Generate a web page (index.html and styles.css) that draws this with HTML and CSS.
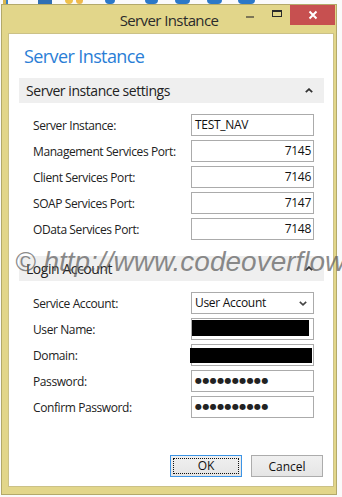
FILE: index.html
```html
<!DOCTYPE html>
<html>
<head>
<meta charset="utf-8">
<link rel="stylesheet" href="styles.css">
</head>
<body>
<div class="desktop">
  <div class="strip">
    <span class="bit b1"></span><span class="bit b2"></span><span class="bit b3"></span><span class="bit b4"></span><span class="bit b5"></span><span class="bit b6"></span><span class="bit b7"></span><span class="bit b8"></span><span class="bit b9"></span><span class="bit b10"></span>
  </div>
  <div class="window">
    <div class="titlebar">
      <div></div>
      <div class="title">Server Instance</div>
      <div class="controls">
        <span class="ctl"><span class="dash"></span></span>
        <span class="ctl"><span class="maxbox"></span></span>
        <span class="ctl close">
          <svg width="10" height="10" viewBox="0 0 10 10"><path d="M1.5 1.5 L8.5 8.5 M8.5 1.5 L1.5 8.5" stroke="#fff" stroke-width="2" fill="none"/></svg>
        </span>
      </div>
    </div>
    <div class="client">
      <h1 class="heading">Server Instance</h1>
      <div class="section first">
        <div class="bar"><span>Server instance settings</span>
          <svg class="chev" width="8" height="5" viewBox="0 0 8 5"><path d="M0.8 4.2 L4 1.2 L7.2 4.2" stroke="#333" stroke-width="1.8" fill="none"/></svg>
        </div>
        <div class="rows">
          <div class="label">Server Instance:</div><div class="field">TEST_NAV</div>
          <div class="label">Management Services Port:</div><div class="field num">7145</div>
          <div class="label">Client Services Port:</div><div class="field num">7146</div>
          <div class="label">SOAP Services Port:</div><div class="field num">7147</div>
          <div class="label">OData Services Port:</div><div class="field num">7148</div>
        </div>
      </div>
      <div class="section">
        <div class="bar"><span>Login Account</span>
          <svg class="chev" width="8" height="5" viewBox="0 0 8 5"><path d="M0.8 4.2 L4 1.2 L7.2 4.2" stroke="#333" stroke-width="1.8" fill="none"/></svg>
        </div>
        <div class="rows">
          <div class="label">Service Account:</div>
          <div class="field select"><span>User Account</span>
            <svg width="8" height="5" viewBox="0 0 8 5"><path d="M0.8 0.8 L4 3.8 L7.2 0.8" stroke="#444" stroke-width="1.6" fill="none"/></svg>
          </div>
          <div class="label">User Name:</div><div class="field"><span class="redact r1"></span></div>
          <div class="label">Domain:</div><div class="field"><span class="redact r2"></span></div>
          <div class="label">Password:</div><div class="field dots">●●●●●●●●●●</div>
          <div class="label">Confirm Password:</div><div class="field dots">●●●●●●●●●●</div>
        </div>
      </div>
      <div class="buttons">
        <button class="btn ok"><span class="focus">OK</span></button>
        <button class="btn">Cancel</button>
      </div>
    </div>
  </div>
  <div class="watermark">© http://www.codeoverflow</div>
</div>
</body>
</html>
```
FILE: styles.css
```css
html, body {
  margin: 0;
  padding: 0;
  overflow: hidden;
  width: 342px;
  height: 497px;
  background: #fafafa;
}
.desktop {
  position: relative;
  width: 342px;
  height: 497px;
  font-family: "Open Sans", "Noto Sans", sans-serif;
}
.strip {
  height: 4px;
  display: flex;
}
.bit { display: block; height: 4px; }
.b1 { width: 3px; margin-left: 3px; background: #d8b64e; }
.b2 { width: 2px; background: #3a7fc1; }
.b3 { width: 14px; margin-left: 30px; background: #2f6fb5; }
.b4 { width: 8px; margin-left: 13px; background: #efc04a; border-radius: 0 0 4px 4px; }
.b5 { width: 7px; margin-left: 3px; background: #eeb84a; border-radius: 0 0 4px 4px; }
.b6 { width: 10px; margin-left: 22px; background: #2b78c8; border-radius: 0 0 5px 5px; }
.b7 { width: 13px; margin-left: 30px; background: #2b78c8; border-radius: 0 0 5px 5px; }
.b8 { width: 15px; margin-left: 17px; background: #2b78c8; border-radius: 0 0 6px 6px; }
.b9 { width: 15px; margin-left: 17px; background: #2b78c8; border-radius: 0 0 6px 6px; }
.b10 { width: 17px; margin-left: 16px; background: #2b78c8; border-radius: 0 0 6px 6px; }

.window {
  margin-left: 1px;
  width: 336px;
  height: 491px;
  box-sizing: border-box;
  border: 1px solid #b3a96a;
  background: #e2d68a;
  padding: 0 2px 7px 6px;
  display: flex;
  flex-direction: column;
}
.titlebar {
  height: 28px;
  margin: 0 -2px 0 -6px;
  display: grid;
  grid-template-columns: 1fr auto 1fr;
  flex: none;
}
.title {
  font-size: 15px;
  line-height: 28px;
  letter-spacing: -0.6px;
  color: #2b2b2b;
  padding-top: 1px;
}
.controls {
  justify-self: end;
  display: flex;
  height: 20px;
  margin-right: 1px;
}
.ctl {
  width: 27px;
  height: 20px;
  display: flex;
  justify-content: center;
}
.dash {
  width: 8px;
  height: 2px;
  margin-top: 11px;
  background: #7d7656;
}
.maxbox {
  width: 10px;
  height: 7px;
  margin-top: 5px;
  box-sizing: border-box;
  border: 1px solid #2a2a2a;
  border-top-width: 2px;
}
.close {
  width: 45px;
  background: #c75050;
  align-items: center;
}
.close svg { display: block; }

.client {
  height: 454px;
  width: 326px;
  box-sizing: border-box;
  background: #fff;
  border: 1px solid #cbc187;
  padding: 10px 9px 9px 10px;
  display: flex;
  flex-direction: column;
  flex: none;
}
.heading {
  margin: 0 0 10px 5px;
  font-size: 18px;
  line-height: 24px;
  letter-spacing: -0.6px;
  font-weight: normal;
  color: #2a7ed6;
}
.section.first { margin-bottom: 16px; }
.bar {
  height: 25px;
  background: #efefef;
  display: flex;
  align-items: center;
  justify-content: space-between;
  padding: 0 11px 0 7px;
  font-size: 14px;
  letter-spacing: -0.45px;
  color: #222;
}
.chev { display: block; }
.rows {
  display: grid;
  grid-template-columns: 158px 123px;
  grid-auto-rows: 22px;
  row-gap: 4px;
  padding: 11px 0 0 14px;
}
.label {
  font-size: 12px;
  letter-spacing: -0.4px;
  color: #222;
  align-self: center;
  white-space: nowrap;
}
.field {
  box-sizing: border-box;
  height: 22px;
  border: 1px solid #ababab;
  padding: 0 3px;
  font-size: 12px;
  letter-spacing: -0.3px;
  line-height: 20px;
  color: #111;
  background: #fff;
}
.field.num { text-align: right; padding-right: 2px; }
.field.select {
  display: flex;
  align-items: center;
  justify-content: space-between;
  padding-right: 6px;
}
.field.select svg { display: block; }
.redact {
  display: block;
  background: #000;
}
.r1 { width: 117px; height: 16px; margin: 1px 0 0 -3px; }
.r2 { width: 122px; height: 15px; margin: 3px 0 0 -5px; }
.field.dots {
  font-family: "DejaVu Sans", sans-serif;
  font-size: 8px;
  letter-spacing: 0.4px;
  color: #222;
}
.buttons {
  margin-top: auto;
  display: flex;
  justify-content: flex-end;
  gap: 9px;
  margin-right: 1px;
}
.btn {
  width: 72px;
  height: 22px;
  box-sizing: border-box;
  border: 1px solid #acacac;
  background: linear-gradient(#f0f0f0, #e5e5e5);
  font-family: "Open Sans", "Noto Sans", sans-serif;
  font-size: 12px;
  color: #111;
  padding: 0;
  margin: 0;
}
.btn.ok {
  border-color: #3c94e6;
  padding: 2px;
}
.focus {
  display: block;
  height: 100%;
  box-sizing: border-box;
  border: 1px dotted #111;
  line-height: 14px;
}
.watermark {
  position: absolute;
  left: 15px;
  top: 248px;
  font-family: "Liberation Sans", Arial, sans-serif;
  font-style: italic;
  font-size: 28px;
  line-height: 28px;
  color: rgba(95, 95, 95, 0.72);
  white-space: nowrap;
}
```
